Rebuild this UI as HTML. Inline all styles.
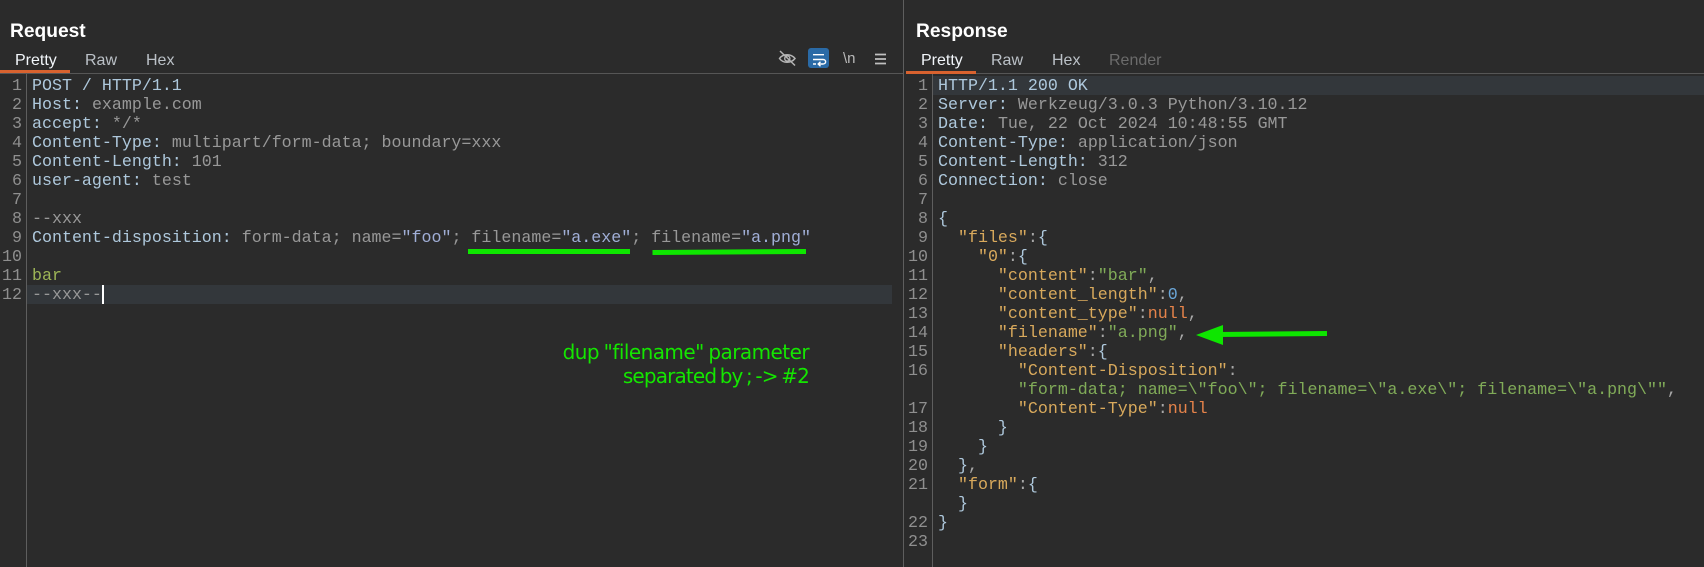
<!DOCTYPE html>
<html><head><meta charset="utf-8">
<style>
html,body{margin:0;padding:0;background:#2b2b2b;}
#p{position:relative;width:1704px;height:567px;overflow:hidden;background:#2b2b2b;font-family:"Liberation Sans",sans-serif;}
.a{position:absolute;}
.title{font-weight:bold;font-size:19.2px;color:#fff;top:21px;line-height:22px;}
.tab{font-size:16px;color:#bbc1c7;top:51px;line-height:20px;}
.code,.nums{position:absolute;top:76px;font-family:"Liberation Mono",monospace;font-size:16.65px;line-height:19px;white-space:pre;margin:0;}
.nums{text-align:right;color:#8f8f8f;width:24px;}
.k{color:#aec8dc}.v{color:#989898}.s{color:#a0aed6}.g{color:#9db556}
.j{color:#d8a95c}.t{color:#80ab58}.n{color:#e6834a}.b{color:#aec8dc}.d{color:#6aa6d8}.c{color:#a8a8a8}
</style></head><body>
<div id="p">
<div class="a" style="left:903px;top:0;width:1px;height:567px;background:#5e5e5e"></div>
<div class="a" style="left:0;top:73px;width:903px;height:1px;background:#565656"></div>
<div class="a" style="left:906px;top:73px;width:798px;height:1px;background:#565656"></div>
<div class="a" style="left:26px;top:74px;width:1px;height:493px;background:#5e5e5e"></div>
<div class="a" style="left:932px;top:74px;width:1px;height:493px;background:#5e5e5e"></div>
<div class="a" style="left:0;top:70px;width:70px;height:3px;background:#d8622f"></div>
<div class="a" style="left:906px;top:71px;width:70px;height:3px;background:#d8622f"></div>
<div class="a" style="left:27px;top:285px;width:865px;height:19px;background:#33373b"></div>
<div class="a" style="left:933px;top:76px;width:771px;height:19px;background:#33373b"></div>
<div class="a title" style="left:10px">Request</div>
<div class="a tab" style="left:15px;color:#f2f6fa">Pretty</div>
<div class="a tab" style="left:85px">Raw</div>
<div class="a tab" style="left:146px">Hex</div>
<div class="a title" style="left:916px">Response</div>
<div class="a tab" style="left:921px;color:#f2f6fa">Pretty</div>
<div class="a tab" style="left:991px">Raw</div>
<div class="a tab" style="left:1052px">Hex</div>
<div class="a tab" style="left:1109px;color:#6b6b6b">Render</div>
<svg class="a" style="left:775px;top:44px" width="120" height="30" viewBox="0 0 120 30" fill="none">
<path d="M4.5 14.5C8 9.5 16 9.5 20 14.5C16 19.5 8 19.5 4.5 14.5Z" stroke="#b4b4b4" stroke-width="1.5"/>
<circle cx="12.3" cy="14.5" r="2.6" stroke="#b4b4b4" stroke-width="1.4"/>
<path d="M5 7L20 21.5" stroke="#b4b4b4" stroke-width="1.5"/>
<rect x="33" y="4" width="21" height="20" rx="3" fill="#2a6aa6"/>
<path d="M38 10.7H49 M38 15.5H48C51.5 15.5 51.5 20 48 20H43.5 M45.5 17.8L43.2 20L45.5 22.2 M38 20H41" stroke="#fff" stroke-width="1.4"/>
<path d="M100 10.5H111 M100 15H111 M100 19.5H111" stroke="#c0c0c0" stroke-width="1.7"/>
</svg>
<div class="a" style="left:843px;top:49px;font-size:15px;line-height:20px;color:#b9b9b9">\n</div>

<pre class="nums" style="left:-2px">1
2
3
4
5
6
7
8
9
10
11
12</pre>
<pre class="code" style="left:32px"><span class="k">POST / HTTP/1.1
Host:</span> <span class="v">example.com</span>
<span class="k">accept:</span> <span class="v">*/*</span>
<span class="k">Content-Type:</span> <span class="v">multipart/form-data; boundary=xxx</span>
<span class="k">Content-Length:</span> <span class="v">101</span>
<span class="k">user-agent:</span> <span class="v">test</span>

<span class="v">--xxx</span>
<span class="k">Content-disposition:</span> <span class="v">form-data; name=</span><span class="s">"foo"</span><span class="v">; filename=</span><span class="s">"a.exe"</span><span class="v">; filename=</span><span class="s">"a.png"</span>

<span class="g">bar</span>
<span class="v">--xxx--</span></pre>
<div class="a" style="left:102px;top:285px;width:2px;height:19px;background:#fff"></div>

<pre class="nums" style="left:904px">1
2
3
4
5
6
7
8
9
10
11
12
13
14
15
16

17
18
19
20
21

22
23</pre>
<pre class="code" style="left:938px"><span class="k">HTTP/1.1 200 OK
Server:</span> <span class="v">Werkzeug/3.0.3 Python/3.10.12</span>
<span class="k">Date:</span> <span class="v">Tue, 22 Oct 2024 10:48:55 GMT</span>
<span class="k">Content-Type:</span> <span class="v">application/json</span>
<span class="k">Content-Length:</span> <span class="v">312</span>
<span class="k">Connection:</span> <span class="v">close</span>

<span class="b">{</span>
  <span class="j">"files"</span><span class="c">:</span><span class="b">{</span>
    <span class="j">"0"</span><span class="c">:</span><span class="b">{</span>
      <span class="j">"content"</span><span class="c">:</span><span class="t">"bar"</span><span class="c">,</span>
      <span class="j">"content_length"</span><span class="c">:</span><span class="d">0</span><span class="c">,</span>
      <span class="j">"content_type"</span><span class="c">:</span><span class="n">null</span><span class="c">,</span>
      <span class="j">"filename"</span><span class="c">:</span><span class="t">"a.png"</span><span class="c">,</span>
      <span class="j">"headers"</span><span class="c">:</span><span class="b">{</span>
        <span class="j">"Content-Disposition"</span><span class="c">:</span>
        <span class="t">"form-data; name=\"foo\"; filename=\"a.exe\"; filename=\"a.png\""</span><span class="c">,</span>
        <span class="j">"Content-Type"</span><span class="c">:</span><span class="n">null</span>
      <span class="b">}</span>
    <span class="b">}</span>
  <span class="b">}</span><span class="c">,</span>
  <span class="j">"form"</span><span class="c">:</span><span class="b">{</span>
  <span class="b">}</span>
<span class="b">}</span></pre>

<svg class="a" style="left:0;top:0" width="1704" height="567" fill="none">
<path d="M468 251.5H630" stroke="#0ee600" stroke-width="5"/>
<path d="M652.5 252.5L806 251.5" stroke="#0ee600" stroke-width="5"/>
<path d="M1216 334.5L1327 333.5" stroke="#0ee600" stroke-width="5"/>
<path d="M1196 335L1223 325V345Z" fill="#0ee600"/>
</svg>
<div class="a" style="left:480px;width:329px;top:340px;text-align:right;font-family:'DejaVu Sans',sans-serif;font-size:20px;line-height:24px;color:#14e600;letter-spacing:-.55px;word-spacing:-1.2px;white-space:pre">dup "filename" parameter</div>
<div class="a" style="left:480px;width:329px;top:364px;text-align:right;font-family:'DejaVu Sans',sans-serif;font-size:20px;line-height:24px;color:#14e600;letter-spacing:-.85px;word-spacing:-2px;white-space:pre">separated by ; -&gt; #2</div>
</div>
</body></html>
